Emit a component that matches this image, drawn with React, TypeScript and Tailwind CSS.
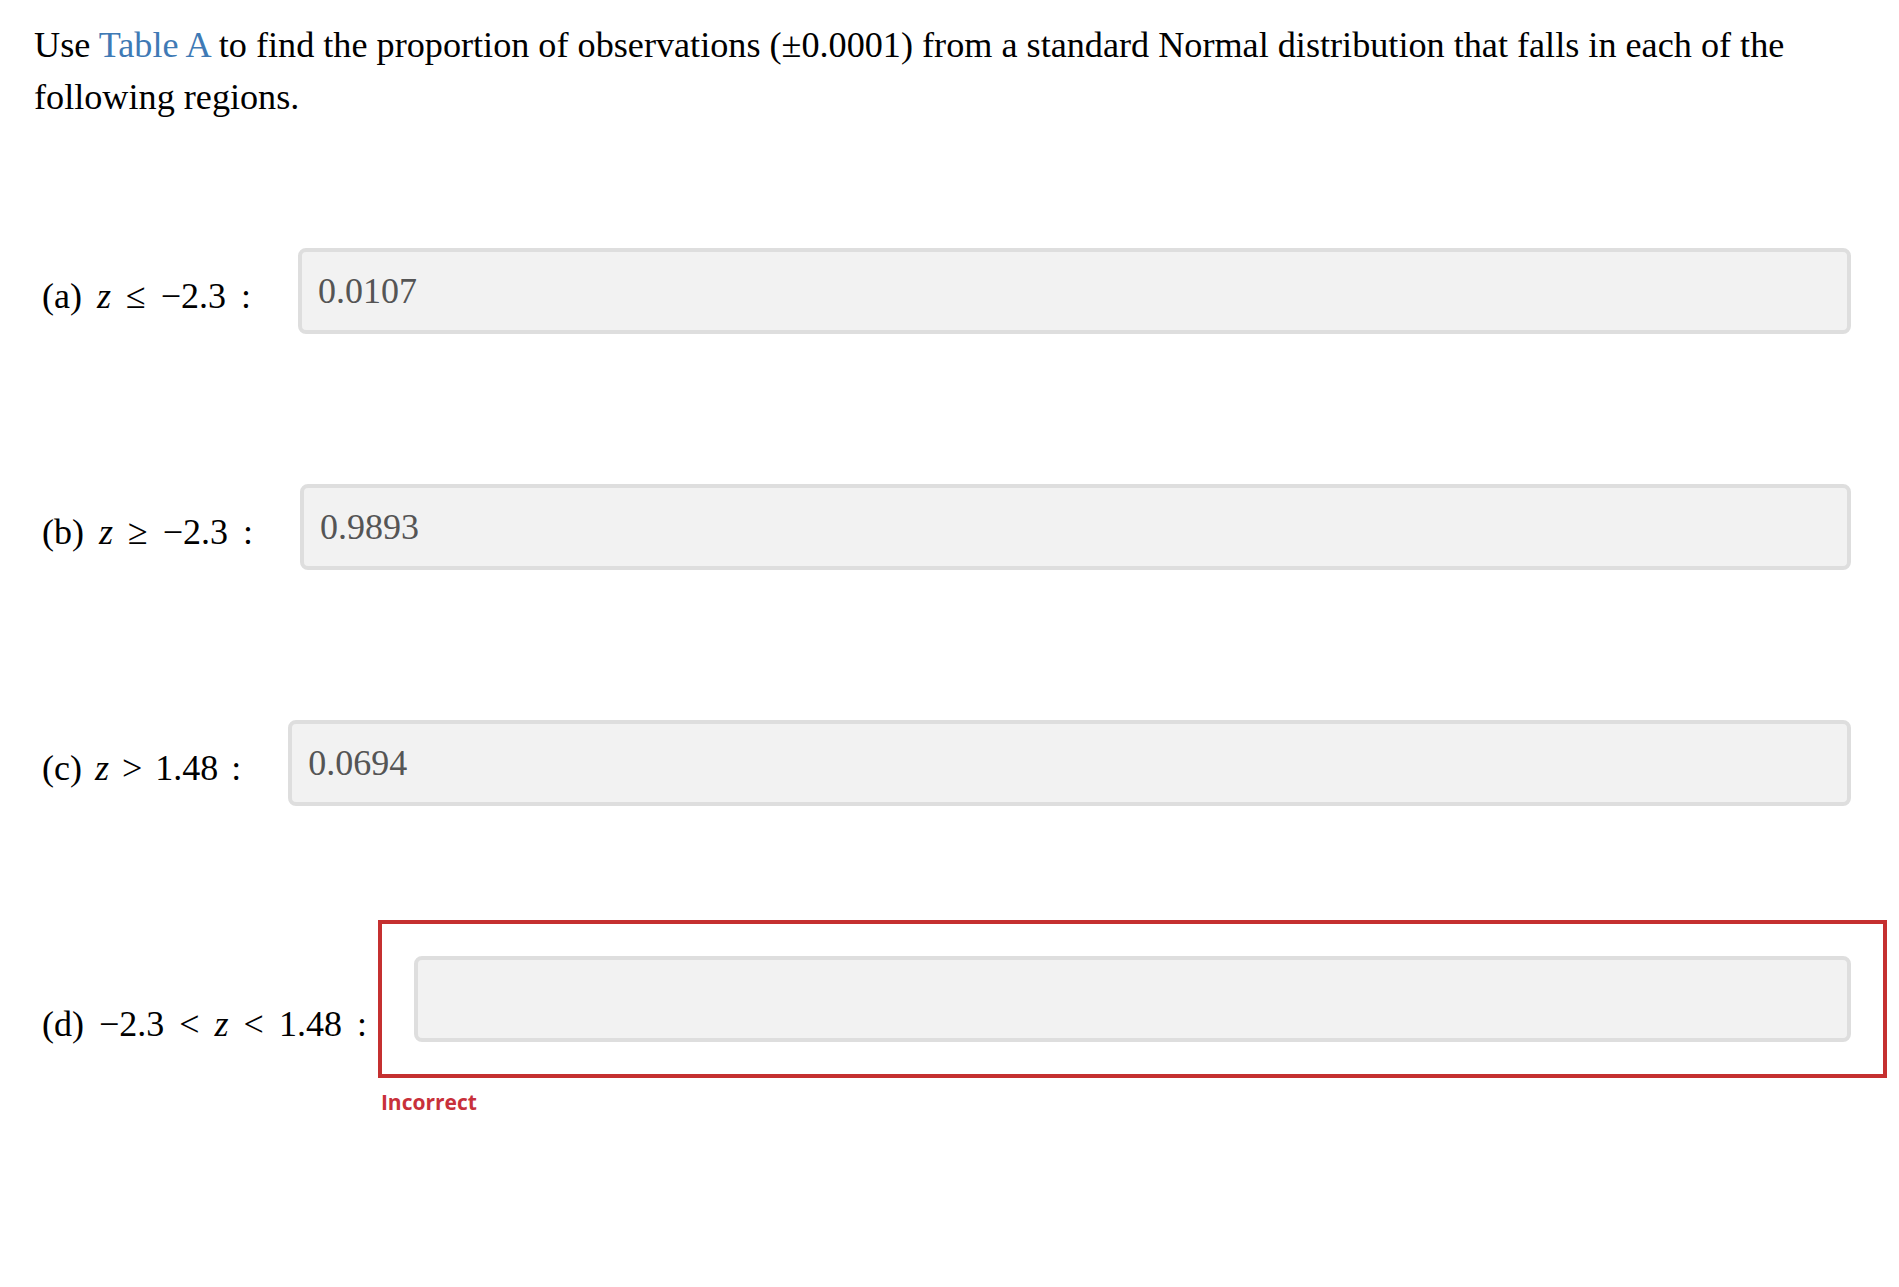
import React from 'react';

type Row = {
  id: string;
  label: React.ReactNode;
  value: string;
  tight?: boolean;
  incorrect?: boolean;
};

const Z = () => <i className="italic">z</i>;

const rows: Row[] = [
  { id: 'a', label: <>(a) <Z /> ≤ −2.3 :</>, value: '0.0107' },
  { id: 'b', label: <>(b) <Z /> ≥ −2.3 :</>, value: '0.9893' },
  { id: 'c', label: <>(c) <Z /> &gt; 1.48 :</>, value: '0.0694', tight: true },
  { id: 'd', label: <>(d) −2.3 &lt; <Z /> &lt; 1.48 :</>, value: '', incorrect: true },
];

function AnswerRow({ row }: { row: Row }) {
  return (
    <div className="flex items-center mt-[78px]">
      <div
        className={`pl-[8px] mt-[10px] whitespace-nowrap text-[36px] text-black ${
          row.tight ? '[word-spacing:4px]' : '[word-spacing:6px]'
        }`}
      >
        {row.label}
      </div>
      <div className="ml-[11px] flex-1 flex flex-col">
        <div className={`border-4 p-8 ${row.incorrect ? 'border-[#c53030]' : 'border-transparent'}`}>
          <input
            readOnly
            value={row.value}
            className="w-full h-[86px] box-border bg-[#f2f2f2] border-4 border-[#dedede] rounded-[8px] px-[16px] text-[36px] text-[#555555] outline-none font-['Liberation_Serif',serif]"
          />
        </div>
        {row.incorrect && (
          <div className="mt-[9px] ml-[3px] text-[21px] font-bold text-[#c8303a] font-['Open_Sans',sans-serif]">
            Incorrect
          </div>
        )}
      </div>
    </div>
  );
}

export default function App() {
  return (
    <div className="min-h-screen bg-white pl-[34px] pr-[12px] pt-[19px] font-['Liberation_Serif',serif]">
      <p className="text-[36.2px] leading-[52px] text-black">
        Use <a className="text-[#3f7ab5]">Table A</a> to find the proportion of observations (±0.0001) from a standard
        Normal distribution that falls in each of the following regions.
      </p>
      <div className="pt-[11px]">
        {rows.map(r => (
          <AnswerRow key={r.id} row={r} />
        ))}
      </div>
    </div>
  );
}
